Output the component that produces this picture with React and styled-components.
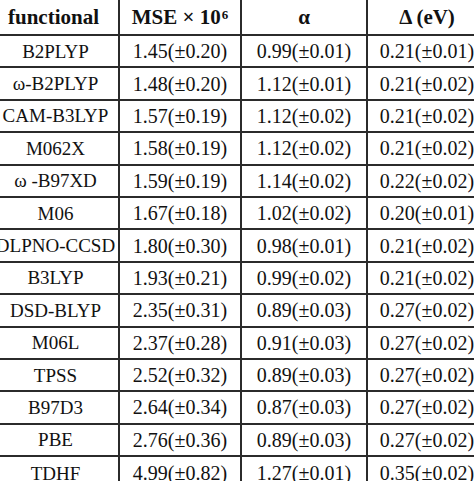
import React from 'react';
import styled, { createGlobalStyle } from 'styled-components';

const rows = [
  ['B2PLYP', '1.45(±0.20)', '0.99(±0.01)', '0.21(±0.01)'],
  ['ω-B2PLYP', '1.48(±0.20)', '1.12(±0.01)', '0.21(±0.02)'],
  ['CAM-B3LYP', '1.57(±0.19)', '1.12(±0.02)', '0.21(±0.02)'],
  ['M062X', '1.58(±0.19)', '1.12(±0.02)', '0.21(±0.02)'],
  ['ω -B97XD', '1.59(±0.19)', '1.14(±0.02)', '0.22(±0.02)'],
  ['M06', '1.67(±0.18)', '1.02(±0.02)', '0.20(±0.01)'],
  ['DLPNO-CCSD', '1.80(±0.30)', '0.98(±0.01)', '0.21(±0.02)'],
  ['B3LYP', '1.93(±0.21)', '0.99(±0.02)', '0.21(±0.02)'],
  ['DSD-BLYP', '2.35(±0.31)', '0.89(±0.03)', '0.27(±0.02)'],
  ['M06L', '2.37(±0.28)', '0.91(±0.03)', '0.27(±0.02)'],
  ['TPSS', '2.52(±0.32)', '0.89(±0.03)', '0.27(±0.02)'],
  ['B97D3', '2.64(±0.34)', '0.87(±0.03)', '0.27(±0.02)'],
  ['PBE', '2.76(±0.36)', '0.89(±0.03)', '0.27(±0.02)'],
  ['TDHF', '4.99(±0.82)', '1.27(±0.01)', '0.35(±0.02)'],
];

const Global = createGlobalStyle`
  html, body {
    margin: 0;
    padding: 0;
    background: #fff;
    overflow: hidden;
  }
`;

const Grid = styled.div`
  display: grid;
  grid-template-columns: 131px 122px 126px 118px;
  grid-template-rows: 36px repeat(14, 32.4px);
  margin-left: -11px;
  width: 497px;
  font-family: "Liberation Serif", "DejaVu Serif", serif;
  color: #111;
`;

const Cell = styled.div`
  box-sizing: border-box;
  display: flex;
  align-items: center;
  justify-content: center;
  white-space: nowrap;
  font-size: ${p => (p.$head ? '21px' : p.$name ? '19px' : '20px')};
  font-weight: ${p => (p.$head ? 700 : 400)};
  border-right: ${p => (p.$last ? 'none' : '2px solid #2b2b2b')};
  border-bottom: ${p => (p.$bottom ? 'none' : '2px solid #2b2b2b')};
  padding-top: ${p => (p.$head ? '0' : '1px')};
  padding-left: ${p => (p.$name ? '4px' : '0')};
`;

const Sup = styled.sup`
  font-size: 0.62em;
  line-height: 0;
  position: relative;
  top: -0.15em;
  margin-left: 1px;
`;

export default function App() {
  const heads = [
    'functional',
    <>MSE × 10<Sup>6</Sup></>,
    'α',
    'Δ (eV)',
  ];
  return (
    <>
      <Global />
      <Grid>
        {heads.map((h, i) => (
          <Cell key={'h' + i} $head $last={i === 3}>{h}</Cell>
        ))}
        {rows.map((r, ri) =>
          r.map((c, ci) => (
            <Cell
              key={ri + '-' + ci}
              $name={ci === 0}
              $last={ci === 3}
              $bottom={ri === rows.length - 1}
            >
              {c}
            </Cell>
          ))
        )}
      </Grid>
    </>
  );
}
